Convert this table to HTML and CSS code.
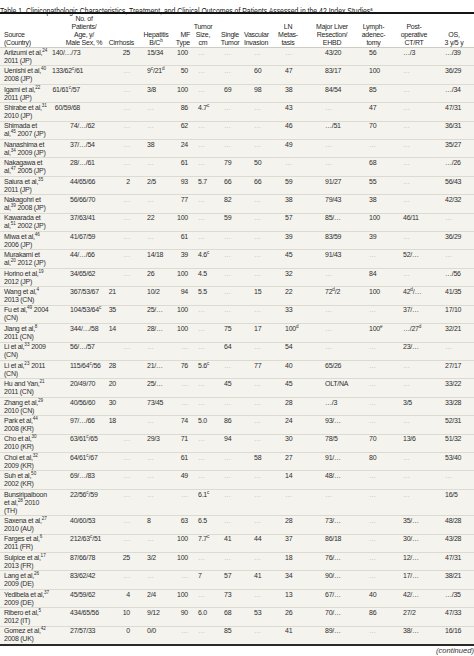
FILE: index.html
```html
<!DOCTYPE html>
<html>
<head>
<meta charset="utf-8">
<link rel="stylesheet" href="styles.css">
</head>
<body>
<div class="page">
  <div class="title"><span class="title-text">Table 1. Clinicopathologic Characteristics, Treatment, and Clinical Outcomes of Patients Assessed in the 42 Index Studies<sup class="tsup">a</sup></span></div>
  <div class="wrap">
  <table class="t">
    <colgroup>
      <col class="w52"><col class="w54"><col class="w32"><col class="w36"><col class="w18"><col class="w24"><col class="w28"><col class="w32"><col class="w29"><col class="w50"><col class="w37"><col class="w44"><col class="w38">
    </colgroup>
    <thead>
      <tr>
        <th>Source<br>(Country)</th>
        <th>No. of<br>Patients/<br>Age, y/<br>Male Sex, %</th>
        <th>Cirrhosis</th>
        <th>Hepatitis<br>B/C<sup>b</sup></th>
        <th>MF<br>Type</th>
        <th>Tumor<br>Size,<br>cm</th>
        <th>Single<br>Tumor</th>
        <th>Vascular<br>Invasion</th>
        <th>LN<br>Metas-<br>tasis</th>
        <th>Major Liver<br>Resection/<br>EHBD</th>
        <th>Lymph-<br>adenec-<br>tomy</th>
        <th>Post-<br>operative<br>CT/RT</th>
        <th>OS,<br>3 y/5 y</th>
      </tr>
    </thead>
    <tbody>
      <tr><td>Ariizumi et al,<sup>24</sup><br>2011 (JP)</td><td class="ra">140/…/73</td><td>25</td><td>15/34</td><td>100</td><td class="e">…</td><td class="e">…</td><td class="e">…</td><td class="e">…</td><td>43/20</td><td>56</td><td>…/3</td><td>…/39</td></tr>
      <tr><td>Uenishi et al,<sup>40</sup><br>2008 (JP)</td><td class="ra">133/62<sup>c</sup>/61</td><td class="e">…</td><td>9<sup>c</sup>/21<sup>d</sup></td><td>50</td><td class="e">…</td><td class="e">…</td><td>60</td><td>47</td><td>83/17</td><td>100</td><td class="e">…</td><td>36/29</td></tr>
      <tr><td>Igami et al,<sup>22</sup><br>2011 (JP)</td><td class="ra">61/61<sup>c</sup>/57</td><td class="e">…</td><td>3/8</td><td>100</td><td class="e">…</td><td>69</td><td>98</td><td>38</td><td>84/54</td><td>85</td><td class="e">…</td><td>…/34</td></tr>
      <tr><td>Shirabe et al,<sup>31</sup><br>2010 (JP)</td><td class="ra">60/59/68</td><td class="e">…</td><td class="e">…</td><td>86</td><td>4.7<sup>c</sup></td><td class="e">…</td><td class="e">…</td><td>43</td><td class="e">…</td><td>47</td><td class="e">…</td><td>47/31</td></tr>
      <tr><td>Shimada et<br>al,<sup>45</sup> 2007 (JP)</td><td>74/…/62</td><td class="e">…</td><td class="e">…</td><td>62</td><td class="e">…</td><td class="e">…</td><td class="e">…</td><td>46</td><td>…/51</td><td>70</td><td class="e">…</td><td>36/31</td></tr>
      <tr><td>Nanashima et<br>al,<sup>34</sup> 2009 (JP)</td><td>37/…/54</td><td class="e">…</td><td>38</td><td>24</td><td class="e">…</td><td class="e">…</td><td class="e">…</td><td>49</td><td class="e">…</td><td class="e">…</td><td class="e">…</td><td>35/27</td></tr>
      <tr><td>Nakagawa et<br>al,<sup>47</sup> 2005 (JP)</td><td>28/…/61</td><td class="e">…</td><td class="e">…</td><td>61</td><td class="e">…</td><td>79</td><td>50</td><td class="e">…</td><td class="e">…</td><td>68</td><td class="e">…</td><td>…/26</td></tr>
      <tr><td>Saiura et al,<sup>35</sup><br>2011 (JP)</td><td>44/65/66</td><td>2</td><td>2/5</td><td>93</td><td>5.7</td><td>66</td><td>66</td><td>59</td><td>91/27</td><td>55</td><td class="e">…</td><td>56/43</td></tr>
      <tr><td>Nakagohri et<br>al,<sup>39</sup> 2008 (JP)</td><td>56/66/70</td><td class="e">…</td><td class="e">…</td><td>77</td><td class="e">…</td><td>82</td><td class="e">…</td><td>38</td><td>79/43</td><td>38</td><td class="e">…</td><td>42/32</td></tr>
      <tr><td>Kawarada et<br>al,<sup>51</sup> 2002 (JP)</td><td>37/63/41</td><td class="e">…</td><td>22</td><td>100</td><td class="e">…</td><td>59</td><td class="e">…</td><td>57</td><td>85/…</td><td>100</td><td>46/11</td><td class="e">…</td></tr>
      <tr><td>Miwa et al,<sup>46</sup><br>2006 (JP)</td><td>41/67/59</td><td class="e">…</td><td class="e">…</td><td>61</td><td class="e">…</td><td class="e">…</td><td class="e">…</td><td>39</td><td>83/59</td><td>39</td><td class="e">…</td><td>36/29</td></tr>
      <tr><td>Murakami et<br>al,<sup>20</sup> 2012 (JP)</td><td>44/…/66</td><td class="e">…</td><td>14/18</td><td>39</td><td>4.6<sup>c</sup></td><td class="e">…</td><td class="e">…</td><td>45</td><td>91/43</td><td class="e">…</td><td>52/…</td><td class="e">…</td></tr>
      <tr><td>Horino et al,<sup>19</sup><br>2012 (JP)</td><td>34/65/62</td><td class="e">…</td><td>26</td><td>100</td><td>4.5</td><td class="e">…</td><td class="e">…</td><td>32</td><td class="e">…</td><td>84</td><td class="e">…</td><td>…/56</td></tr>
      <tr><td>Wang et al,<sup>4</sup><br>2013 (CN)</td><td>367/53/67</td><td class="sh">21</td><td>10/2</td><td>94</td><td>5.5</td><td class="e">…</td><td>15</td><td>22</td><td>72<sup>d</sup>/2</td><td>100</td><td>42<sup>d</sup>/…</td><td>41/35</td></tr>
      <tr><td>Fu et al,<sup>49</sup> 2004<br>(CN)</td><td>104/53/64<sup>c</sup></td><td class="sh">35</td><td>25/…</td><td>100</td><td class="e">…</td><td class="e">…</td><td class="e">…</td><td>33</td><td class="e">…</td><td class="e">…</td><td>37/…</td><td>17/10</td></tr>
      <tr><td>Jiang et al,<sup>8</sup><br>2011 (CN)</td><td>344/…/58</td><td class="sh">14</td><td>28/…</td><td>100</td><td class="e">…</td><td>75</td><td>17</td><td>100<sup>d</sup></td><td class="e">…</td><td>100<sup>e</sup></td><td>…/27<sup>d</sup></td><td>32/21</td></tr>
      <tr><td>Li et al,<sup>33</sup> 2009<br>(CN)</td><td>56/…/57</td><td class="e">…</td><td class="e">…</td><td class="e">…</td><td class="e">…</td><td>64</td><td class="e">…</td><td>54</td><td class="e">…</td><td class="e">…</td><td>23/…</td><td class="e">…</td></tr>
      <tr><td>Li et al,<sup>23</sup> 2011<br>(CN)</td><td>115/64<sup>c</sup>/56</td><td class="sh">28</td><td>21/…</td><td>76</td><td>5.6<sup>c</sup></td><td class="e">…</td><td>77</td><td>40</td><td>65/26</td><td class="e">…</td><td class="e">…</td><td>27/17</td></tr>
      <tr><td>Hu and Yan,<sup>21</sup><br>2011 (CN)</td><td>20/49/70</td><td class="sh">20</td><td>25/…</td><td class="e">…</td><td class="e">…</td><td>45</td><td class="e">…</td><td>45</td><td>OLT/NA</td><td class="e">…</td><td class="e">…</td><td>33/22</td></tr>
      <tr><td>Zhang et al,<sup>29</sup><br>2010 (CN)</td><td>40/56/60</td><td class="sh">30</td><td>73/45</td><td class="e">…</td><td class="e">…</td><td class="e">…</td><td class="e">…</td><td>28</td><td>…/3</td><td class="e">…</td><td>3/5</td><td>33/28</td></tr>
      <tr><td>Park et al,<sup>44</sup><br>2008 (KR)</td><td>97/…/66</td><td class="sh">18</td><td class="e">…</td><td>74</td><td>5.0</td><td>86</td><td class="e">…</td><td>24</td><td>93/…</td><td class="e">…</td><td class="e">…</td><td>52/31</td></tr>
      <tr><td>Cho et al,<sup>30</sup><br>2010 (KR)</td><td>63/61<sup>c</sup>/65</td><td class="e">…</td><td>29/3</td><td>71</td><td class="e">…</td><td>94</td><td class="e">…</td><td>30</td><td>78/5</td><td>70</td><td>13/6</td><td>51/32</td></tr>
      <tr><td>Choi et al,<sup>32</sup><br>2009 (KR)</td><td>64/61<sup>c</sup>/67</td><td class="e">…</td><td class="e">…</td><td>61</td><td class="e">…</td><td class="e">…</td><td>58</td><td>27</td><td>91/…</td><td>80</td><td class="e">…</td><td>53/40</td></tr>
      <tr><td>Suh et al,<sup>50</sup><br>2002 (KR)</td><td>69/…/83</td><td class="e">…</td><td class="e">…</td><td>49</td><td class="e">…</td><td class="e">…</td><td class="e">…</td><td>14</td><td>48/…</td><td class="e">…</td><td class="e">…</td><td class="e">…</td></tr>
      <tr><td>Bunsiripaiboon<br>et al,<sup>28</sup> 2010<br>(TH)</td><td>22/56<sup>c</sup>/59</td><td class="e">…</td><td class="e">…</td><td class="e">…</td><td>6.1<sup>c</sup></td><td class="e">…</td><td class="e">…</td><td class="e">…</td><td class="e">…</td><td class="e">…</td><td class="e">…</td><td>16/5</td></tr>
      <tr><td>Saxena et al,<sup>27</sup><br>2010 (AU)</td><td>40/60/53</td><td class="e">…</td><td>8</td><td>63</td><td>6.5</td><td class="e">…</td><td class="e">…</td><td>28</td><td>73/…</td><td class="e">…</td><td>35/…</td><td>48/28</td></tr>
      <tr><td>Farges et al,<sup>6</sup><br>2011 (FR)</td><td>212/63<sup>c</sup>/51</td><td class="e">…</td><td class="e">…</td><td>100</td><td>7.7<sup>c</sup></td><td>41</td><td>44</td><td>37</td><td>86/18</td><td class="e">…</td><td>30/…</td><td>43/28</td></tr>
      <tr><td>Sulpice et al,<sup>17</sup><br>2013 (FR)</td><td>87/66/78</td><td>25</td><td>3/2</td><td>100</td><td class="e">…</td><td class="e">…</td><td class="e">…</td><td>18</td><td>76/…</td><td class="e">…</td><td>12/…</td><td>47/31</td></tr>
      <tr><td>Lang et al,<sup>26</sup><br>2009 (DE)</td><td>83/62/42</td><td class="e">…</td><td class="e">…</td><td class="e">…</td><td>7</td><td>57</td><td>41</td><td>34</td><td>90/…</td><td class="e">…</td><td>17/…</td><td>38/21</td></tr>
      <tr><td>Yedibela et al,<sup>37</sup><br>2009 (DE)</td><td>45/59/62</td><td>4</td><td>2/4</td><td>100</td><td class="e">…</td><td>73</td><td class="e">…</td><td>13</td><td>67/…</td><td>40</td><td>42/…</td><td>…/35</td></tr>
      <tr><td>Ribero et al,<sup>5</sup><br>2012 (IT)</td><td>434/65/56</td><td>10</td><td>9/12</td><td>90</td><td>6.0</td><td>68</td><td>53</td><td>26</td><td>70/…</td><td>86</td><td>27/2</td><td>47/33</td></tr>
      <tr><td>Gomez et al,<sup>42</sup><br>2008 (UK)</td><td>27/57/33</td><td>0</td><td>0/0</td><td class="e">…</td><td class="e">…</td><td>85</td><td class="e">…</td><td>41</td><td>89/…</td><td class="e">…</td><td>38/…</td><td>16/16</td></tr>
    </tbody>
  </table>
  </div>
  <div class="cont">(continued)</div>
</div>
</body>
</html>
```

FILE: styles.css
```css
html, body {
  margin: 0;
  padding: 0;
  background: #ffffff;
  overflow: hidden;
}

.page {
  width: 474px;
  font-family: "Liberation Sans", Arial, sans-serif;
  color: #333;
}

.title {
  height: 12px;
  border-bottom: 2px solid #151515;
  white-space: nowrap;
}

.title-text {
  display: inline-block;
  font-size: 8.6px;
  line-height: 11px;
  color: #151515;
  transform: scaleX(0.8);
  transform-origin: 0 50%;
}

.tsup {
  font-size: 5px;
  line-height: 0;
  vertical-align: 3px;
}

.wrap {
  border-bottom: 2px solid #2a2a2a;
}

.t {
  width: 474px;
  table-layout: fixed;
  border-collapse: collapse;
  border-spacing: 0;
  font-size: 7px;
  letter-spacing: -0.25px;
}

.w52 { width: 52px; }
.w54 { width: 54px; }
.w32 { width: 32px; }
.w36 { width: 36px; }
.w18 { width: 18px; }
.w24 { width: 24px; }
.w28 { width: 28px; }
.w29 { width: 29px; }
.w50 { width: 50px; }
.w37 { width: 37px; }
.w44 { width: 44px; }
.w38 { width: 38px; }

.t th, .t td {
  white-space: nowrap;
  overflow: visible;
}

.t sup {
  font-size: 4.6px;
  line-height: 0;
  vertical-align: 2.6px;
  letter-spacing: 0;
}

/* header */
.t th {
  background: #ffffff;
  font-weight: normal;
  color: #262626;
  line-height: 8px;
  vertical-align: bottom;
  padding: 1px 0 0 0;
  text-align: center;
  border-bottom: 1px solid #cfccc4;
}

.t th:nth-child(1) { text-align: left; padding-left: 4px; }
.t th:nth-child(2) { padding-left: 10px; }
.t th:nth-child(3) { text-align: right; padding-right: 4px; }
.t th:nth-child(5) { text-align: right; padding-right: 2px; }
.t th:nth-child(6) { padding-right: 2px; }
.t th:nth-child(8) { padding-right: 8px; }
.t th:nth-child(9) { padding-right: 5px; }
.t th:nth-child(10) { padding-left: 4px; }
.t th:nth-child(13) { padding-right: 2px; }

/* body */
.t td {
  background: #f4f3ee;
  color: #2e2e2e;
  line-height: 8px;
  vertical-align: top;
  padding: 0.8px 0 0.62px 0;
  border-bottom: 1px solid #dddad2;
  text-align: left;
}

.t tbody tr:last-child td { border-bottom: none; }

.t td:nth-child(1) { padding-left: 4px; }
.t td:nth-child(2) { padding-left: 18px; }
.t td:nth-child(3) { text-align: right; padding-right: 8px; }
.t td:nth-child(4) { padding-left: 9px; }
.t td:nth-child(5) { text-align: right; padding-right: 4px; }
.t td:nth-child(6) { padding-left: 6px; }
.t td:nth-child(7) { padding-left: 8px; }
.t td:nth-child(8) { padding-left: 10px; }
.t td:nth-child(9) { padding-left: 9px; }
.t td:nth-child(10) { padding-left: 20px; }
.t td:nth-child(11) { padding-left: 14px; }
.t td:nth-child(12) { padding-left: 11px; }
.t td:nth-child(13) { padding-left: 9px; }

.t td.ra { text-align: right; padding-left: 0; padding-right: 26px; }
.t td.sh { padding-right: 22px; }
.t td.e { color: #b4b2ac; }

.cont {
  text-align: right;
  font-style: italic;
  font-size: 7.6px;
  line-height: 10px;
  color: #333;
  padding-right: 0;
}
```
